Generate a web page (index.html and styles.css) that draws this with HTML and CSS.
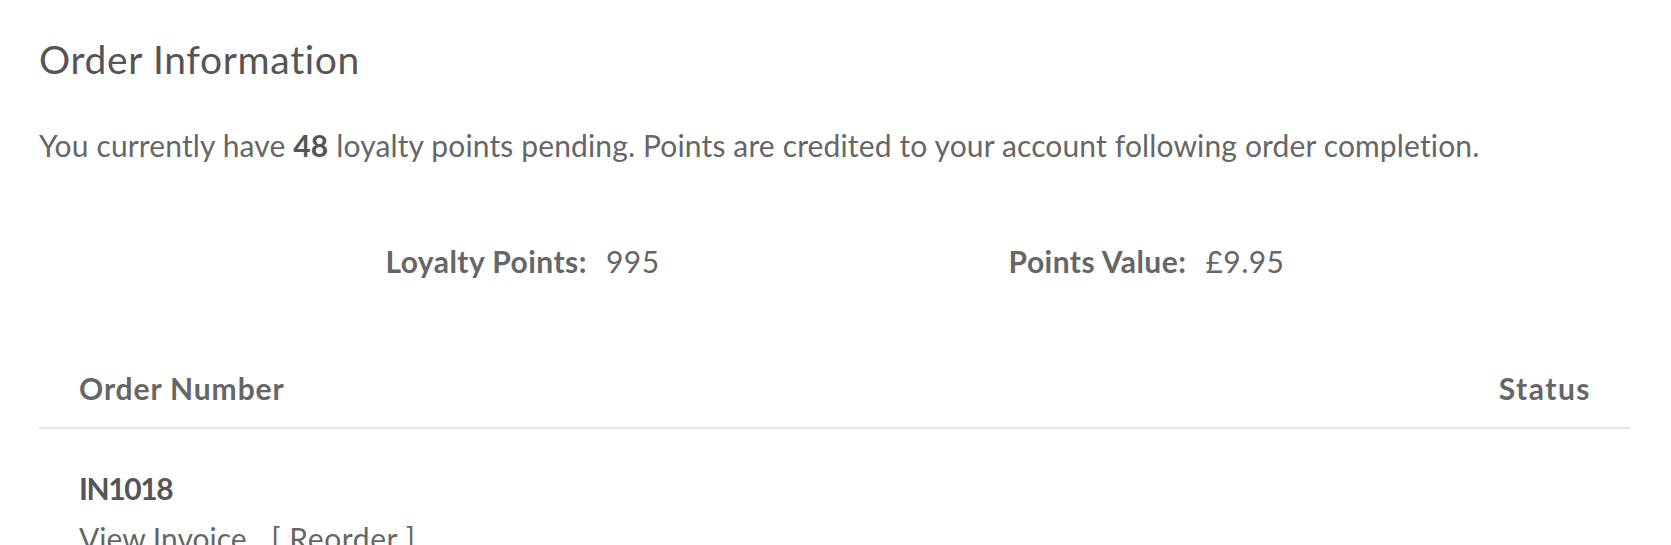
FILE: index.html
```html
<!DOCTYPE html>
<html lang="en">
<head>
  <meta charset="UTF-8" />
  <meta name="viewport" content="width=device-width, initial-scale=1.0"/>
  <title>Order Information</title>
  <link rel="stylesheet" href="styles.css">
</head>
<body>

  <div class="account">
    <h1>Order Information</h1>

    <p class="pending">You currently have <strong>48</strong> loyalty points pending. Points are credited to your account following order completion.</p>

    <div class="points">
      <div class="points-item">
        <strong>Loyalty Points:</strong> <span class="points-value">995</span>
      </div>
      <div class="points-item">
        <strong>Points Value:</strong> <span class="points-value">£9.95</span>
      </div>
    </div>

    <table class="orders">
      <thead>
        <tr>
          <th class="col-number">Order Number</th>
          <th class="col-status">Status</th>
        </tr>
      </thead>
      <tbody>
        <tr>
          <td class="col-number">
            <div class="order-id">IN1018</div>
            <div class="order-links">
              <a href="#">View Invoice</a>
              <a href="#" class="reorder">[ Reorder ]</a>
            </div>
          </td>
          <td class="col-status"></td>
        </tr>
      </tbody>
    </table>
  </div>

</body>
</html>
```
FILE: styles.css
```css
* {
  box-sizing: border-box;
  margin: 0;
  padding: 0;
}

body {
  font-family: Lato, 'Open Sans', sans-serif;
  font-variant-ligatures: none;
  background: #fff;
  color: #666;
  font-size: 30px;
  line-height: 1.2;
}

.account {
  padding: 36px 41px 0 39px;
}

h1 {
  font-size: 39px;
  font-weight: 400;
  color: #555;
  line-height: 1.2;
  letter-spacing: 0.65px;
}

.pending {
  margin-top: 44px;
  letter-spacing: 0.14px;
}

.pending strong {
  color: #555;
}

.points {
  display: grid;
  grid-template-columns: 1fr 1fr;
  max-width: 1248px;
  margin: 80px auto 0;
  text-align: center;
  letter-spacing: 0.45px;
}

.points-item strong {
  color: #666;
}

.points-value {
  margin-left: 11px;
}

.orders {
  width: 100%;
  border-collapse: collapse;
  margin-top: 69px;
}

.orders th {
  font-weight: 700;
  text-align: left;
  padding: 22px 40px 21px;
  border-bottom: 2px solid #e6e6e6;
  letter-spacing: 0.9px;
}

.orders th.col-status {
  text-align: right;
  padding-right: 39px;
  letter-spacing: 1.5px;
}

.orders td {
  padding: 41px 40px 0;
  vertical-align: top;
}

.order-id {
  font-weight: 700;
  color: #555;
  letter-spacing: -1.4px;
}

.order-links {
  margin-top: 14px;
}

.order-links a {
  color: #666;
  text-decoration: none;
}

.order-links .reorder {
  margin-left: 17px;
  letter-spacing: 0.6px;
}
```
